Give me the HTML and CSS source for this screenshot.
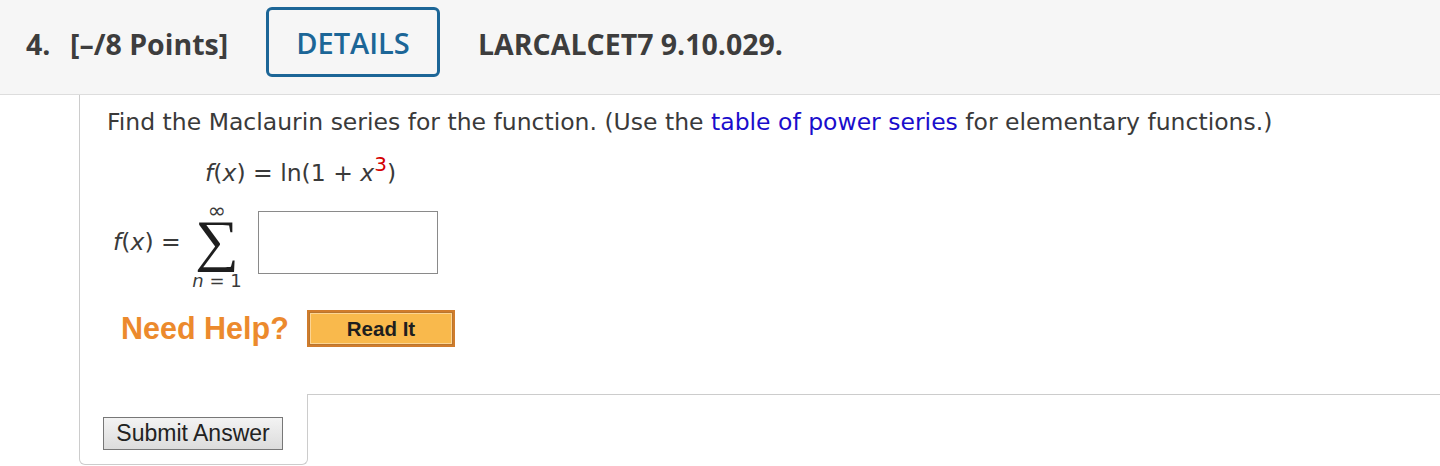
FILE: index.html
```html
<!DOCTYPE html>
<html>
<head>
<meta charset="utf-8">
<link rel="stylesheet" href="styles.css">
</head>
<body>
<div class="question">
  <div class="qhead">
    <span class="qnum">4.</span>
    <span class="qpts">[–/8 Points]</span>
    <span class="details">DETAILS</span>
    <span class="qid">LARCALCET7 9.10.029.</span>
  </div>
  <div class="qmain">
    <p class="prompt">Find the Maclaurin series for the function. (Use the <a class="link">table of power series</a> for elementary functions.)</p>
    <p class="formula"><i>f</i>(<i>x</i>) = ln(1 + <i>x</i><sup class="red">3</sup>)</p>
    <div class="sumrow">
      <span class="lhs"><i>f</i>(<i>x</i>) =</span>
      <span class="sigma">
        <span class="inf">∞</span>
        <span class="sig">∑</span>
        <span class="lower"><i>n</i> = 1</span>
      </span>
      <span class="answer"></span>
    </div>
    <div class="help">
      <span class="needhelp">Need Help?</span>
      <span class="readit"><span class="readit-in">Read It</span></span>
    </div>
  </div>
  <div class="qfoot">
    <div class="submitcell"><button class="submit">Submit Answer</button></div>
    <div class="restcell"></div>
  </div>
</div>
</body>
</html>
```

FILE: styles.css
```css
html, body {
  margin: 0;
  padding: 0;
  background: #fff;
}
body {
  width: 1440px;
  height: 466px;
  overflow: hidden;
}
.qhead {
  height: 94px;
  background: #f6f6f6;
  border-bottom: 1px solid #dddddd;
  display: flex;
  align-items: center;
  font-family: "Open Sans", sans-serif;
  font-weight: 700;
  color: #3d3d3d;
  font-size: 28.5px;
  box-sizing: content-box;
}
.qnum {
  margin-left: 26px;
  width: 44px;
  margin-top: -6px;
}
.qpts {
  width: 196px;
  margin-top: -6px;
}
.details {
  box-sizing: border-box;
  width: 174px;
  height: 70px;
  margin-top: -10px;
  border: 3px solid #1c6697;
  border-radius: 6px;
  color: #1c6697;
  font-weight: 600;
  font-size: 29px;
  display: flex;
  align-items: center;
  justify-content: center;
}
.qid {
  margin-left: 38px;
  margin-top: -6px;
}
.qmain {
  margin-left: 79px;
  border-left: 1px solid #cccccc;
  height: 299px;
  padding-left: 27px;
  font-family: "DejaVu Sans", Verdana, sans-serif;
  color: #3a3a3a;
  font-size: 23.5px;
  box-sizing: border-box;
  padding-top: 12px;
}
.prompt {
  margin: 0;
  line-height: 30px;
}
.link {
  color: #1a0dcc;
  text-decoration: none;
}
.formula {
  margin: 21px 0 0 98px;
  line-height: 30px;
}
.red {
  color: #d40000;
  font-size: 20px;
  vertical-align: 10px;
  line-height: 0;
}
.sumrow {
  display: flex;
  align-items: flex-start;
  margin-top: 17px;
  margin-left: 6px;
  height: 85px;
}
.lhs {
  width: 78px;
  line-height: 30px;
  margin-top: 22px;
}
.sigma {
  display: flex;
  flex-direction: column;
  align-items: center;
  width: 58px;
  margin-left: -3px;
  line-height: 1;
}
.inf {
  font-size: 22px;
  line-height: 14px;
  height: 14px;
  transform: translateY(-1px);
}
.sig {
  font-family: "Liberation Serif", "DejaVu Serif", serif;
  font-size: 57px;
  line-height: 48px;
  height: 48px;
  color: #1e1e1e;
  transform: translateY(-2px) scaleX(1.08);
}
.lower {
  font-size: 18px;
  line-height: 20px;
  margin-top: 4px;
}
.answer {
  box-sizing: border-box;
  width: 180px;
  height: 63px;
  border: 1px solid #8a8a8a;
  margin-left: 12px;
  margin-top: 6px;
}
.help {
  display: flex;
  align-items: center;
  margin-top: 20px;
  margin-left: 14px;
}
.needhelp {
  font-family: "Liberation Sans", Arial, sans-serif;
  font-weight: 700;
  font-size: 30.5px;
  color: #ec8a2d;
  width: 186px;
}
.readit {
  box-sizing: border-box;
  width: 148px;
  height: 37px;
  background: #d07c2c;
  padding: 2px;
  display: flex;
}
.readit-in {
  flex: 1;
  background: #f9b94c;
  border: 1px solid #b8752e;
  box-shadow: inset 0 0 0 1px #fcd493;
  display: flex;
  align-items: center;
  justify-content: center;
  font-family: "Liberation Sans", Arial, sans-serif;
  font-weight: 700;
  font-size: 20.5px;
  color: #1e1e1e;
}
.qfoot {
  display: flex;
  height: 71px;
}
.submitcell {
  box-sizing: border-box;
  margin-left: 79px;
  width: 229px;
  border: 1px solid #cccccc;
  border-top: none;
  border-radius: 0 0 6px 6px;
  padding: 23px 0 0 23px;
}
.restcell {
  flex: 1;
  border-top: 1px solid #cccccc;
}
.submit {
  box-sizing: border-box;
  width: 180px;
  height: 33px;
  border: 1px solid #777;
  background: linear-gradient(#f3f3f3, #dcdcdc);
  font-family: "Liberation Sans", Arial, sans-serif;
  font-size: 23px;
  color: #222;
  padding: 0;
  border-radius: 0;
  white-space: nowrap;
}
```
